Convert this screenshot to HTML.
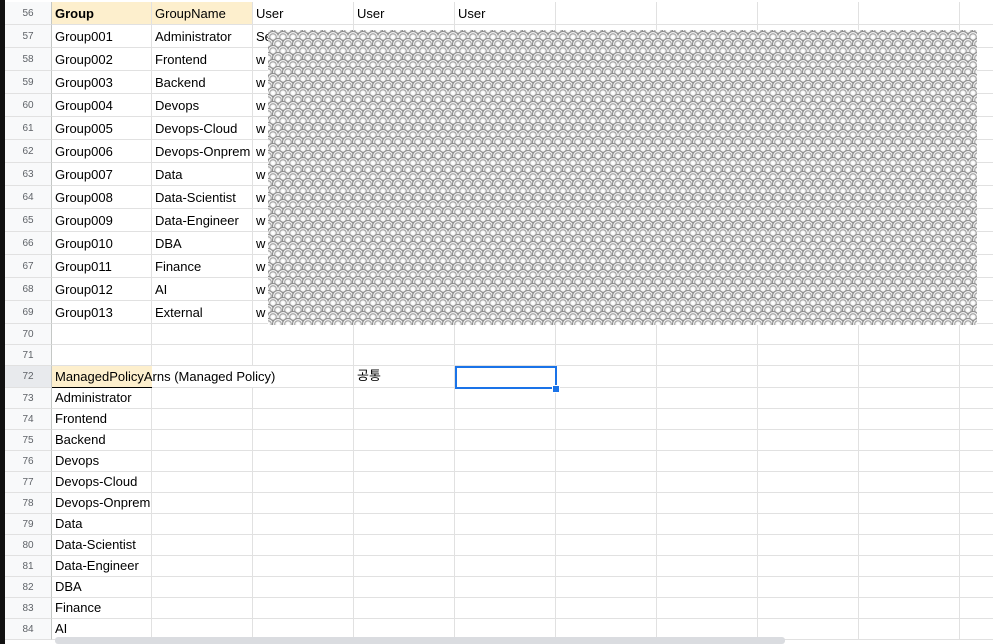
<!DOCTYPE html>
<html><head><meta charset="utf-8"><style>
body{margin:0;width:993px;height:644px;overflow:hidden;background:#fff;font-family:"Liberation Sans","Noto Sans CJK KR",sans-serif;position:relative}
.c{position:absolute;box-sizing:border-box;border-right:1px solid #e1e1e1;border-bottom:1px solid #e1e1e1;font-size:13px;color:#000;padding-left:3px;white-space:nowrap;overflow:visible;display:flex;align-items:flex-end;padding-bottom:3px}
.h{position:absolute;box-sizing:border-box;left:5px;width:47px;background:#f8f9fa;border-right:1px solid #c4c7c5;border-bottom:1px solid #e1e1e1;font-size:10px;color:#5f6368;text-align:center;display:flex;align-items:center;justify-content:center}
</style></head><body>
<div style="position:absolute;left:0;top:0;width:5px;height:644px;background:#111"></div>
<div id="g"></div>
<svg style="position:absolute;left:268px;top:30px" width="709" height="295">
<defs>
<g id="s"><circle r="6" fill="#8c8c8c"/><circle r="5" fill="#f2f2f2"/><circle r="3.8" fill="#9a9a9a"/><circle r="2.8" fill="#eee"/><circle r="1.6" fill="#fff"/></g>
<pattern id="p" width="10" height="14" patternUnits="userSpaceOnUse">
<rect width="10" height="14" fill="#e8e8e8"/>
<use href="#s" x="0" y="0"/><use href="#s" x="10" y="0"/>
<use href="#s" x="5" y="7"/>
<use href="#s" x="0" y="14"/><use href="#s" x="10" y="14"/>
</pattern></defs>
<rect width="709" height="295" fill="url(#p)"/></svg>
<div style="position:absolute;left:455px;top:366px;width:102px;height:23px;box-sizing:border-box;border:2px solid #1a73e8"></div>
<div style="position:absolute;left:552px;top:385px;width:6px;height:6px;background:#1a73e8;border:1px solid #fff"></div>
<div style="position:absolute;left:55px;top:637px;width:730px;height:7px;background:#dadce0;border-radius:3px"></div>
<script>
var cols=[52,152,253,354,455,556,657,758,859,960,1061];
var rows=[];var y=2;
for(var r=56;r<=84;r++){var h=r<=69?23:(r<=71?21:(r==72?22:21));rows.push([r,y,h]);y+=h;}
var data={56:["Group","GroupName","User","User","User"],
57:["Group001","Administrator","Se"],58:["Group002","Frontend","w"],59:["Group003","Backend","w"],60:["Group004","Devops","w"],61:["Group005","Devops-Cloud","w"],62:["Group006","Devops-Onprem","w"],63:["Group007","Data","w"],64:["Group008","Data-Scientist","w"],65:["Group009","Data-Engineer","w"],66:["Group010","DBA","w"],67:["Group011","Finance","w"],68:["Group012","AI","w"],69:["Group013","External","w"],
72:["ManagedPolicyArns (Managed Policy)","","","공통"],73:["Administrator"],74:["Frontend"],75:["Backend"],76:["Devops"],77:["Devops-Cloud"],78:["Devops-Onprem"],79:["Data"],80:["Data-Scientist"],81:["Data-Engineer"],82:["DBA"],83:["Finance"],84:["AI"]};
var s="";
rows.forEach(function(o){var r=o[0],t=o[1],h=o[2];
s+='<div class="h" style="top:'+t+'px;height:'+h+'px;'+(r==72?'background:#e8eaed;':'')+'">'+r+'</div>';
for(var i=0;i<cols.length-1;i++){var d=data[r]||[];var txt=d[i]||"";var st="left:"+cols[i]+"px;top:"+t+"px;width:"+(cols[i+1]-cols[i])+"px;height:"+h+"px;";
if(r==56&&i<2)st+="background:#fdefcd;";
if(r==56&&i==0)st+="font-weight:bold;";
if(r==72&&i==0)st+="background:#fdefcd;border-bottom:1px solid #000;z-index:1;";
if(r==72&&i<2)st+="border-right:none;";
s+='<div class="c" style="'+st+'">'+txt+'</div>';}
});
document.getElementById("g").innerHTML=s;
</script>
</body></html>
